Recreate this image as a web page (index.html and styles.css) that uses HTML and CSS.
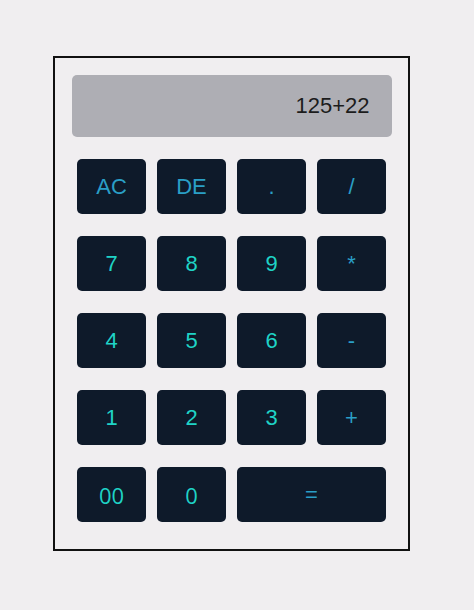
FILE: index.html
```html
<!DOCTYPE html>
<html lang="en">
<head>
  <meta charset="UTF-8" />
  <title>Calculator</title>
  <link rel="stylesheet" href="styles.css">
</head>
<body>
  <div class="calculator">
    <!-- Display -->
    <div class="display">125+22</div>

    <!-- Keys -->
    <div class="keys">
      <button class="op">AC</button>
      <button class="op">DE</button>
      <button class="op">.</button>
      <button class="op">/</button>

      <button class="num">7</button>
      <button class="num">8</button>
      <button class="num">9</button>
      <button class="op">*</button>

      <button class="num">4</button>
      <button class="num">5</button>
      <button class="num">6</button>
      <button class="op">-</button>

      <button class="num">1</button>
      <button class="num">2</button>
      <button class="num">3</button>
      <button class="op">+</button>

      <button class="num zero">00</button>
      <button class="num zero">0</button>
      <button class="op equal">=</button>
    </div>
  </div>
</body>
</html>
```
FILE: styles.css
```css
* {
  margin: 0;
  padding: 0;
  box-sizing: border-box;
  font-family: 'Liberation Sans', Arial, sans-serif;
}

body {
  background: #f0eef0;
  width: 474px;
  height: 610px;
  overflow: hidden;
}

.calculator {
  width: 357px;
  margin: 56px 0 0 53px;
  border: 2px solid #111;
  padding: 17px 0 27px;
  display: flex;
  flex-direction: column;
  align-items: center;
  gap: 22px;
}

.display {
  width: 320px;
  height: 62px;
  background: #aeaeb4;
  border-radius: 5px;
  padding: 0 22px;
  display: flex;
  align-items: center;
  justify-content: flex-end;
  font-size: 22px;
  color: #1c1c1c;
}

.keys {
  display: grid;
  grid-template-columns: repeat(4, 69px);
  grid-auto-rows: 55px;
  column-gap: 11px;
  row-gap: 22px;
}

button {
  background: #0e1a2a;
  border: none;
  border-radius: 5px;
  font-size: 22px;
  cursor: pointer;
}

.num {
  color: #1fd3c6;
}

.op {
  color: #2a9fc6;
}

.zero {
  font-family: 'Open Sans', 'Liberation Sans', sans-serif;
}

.equal {
  grid-column: span 2;
}
```
